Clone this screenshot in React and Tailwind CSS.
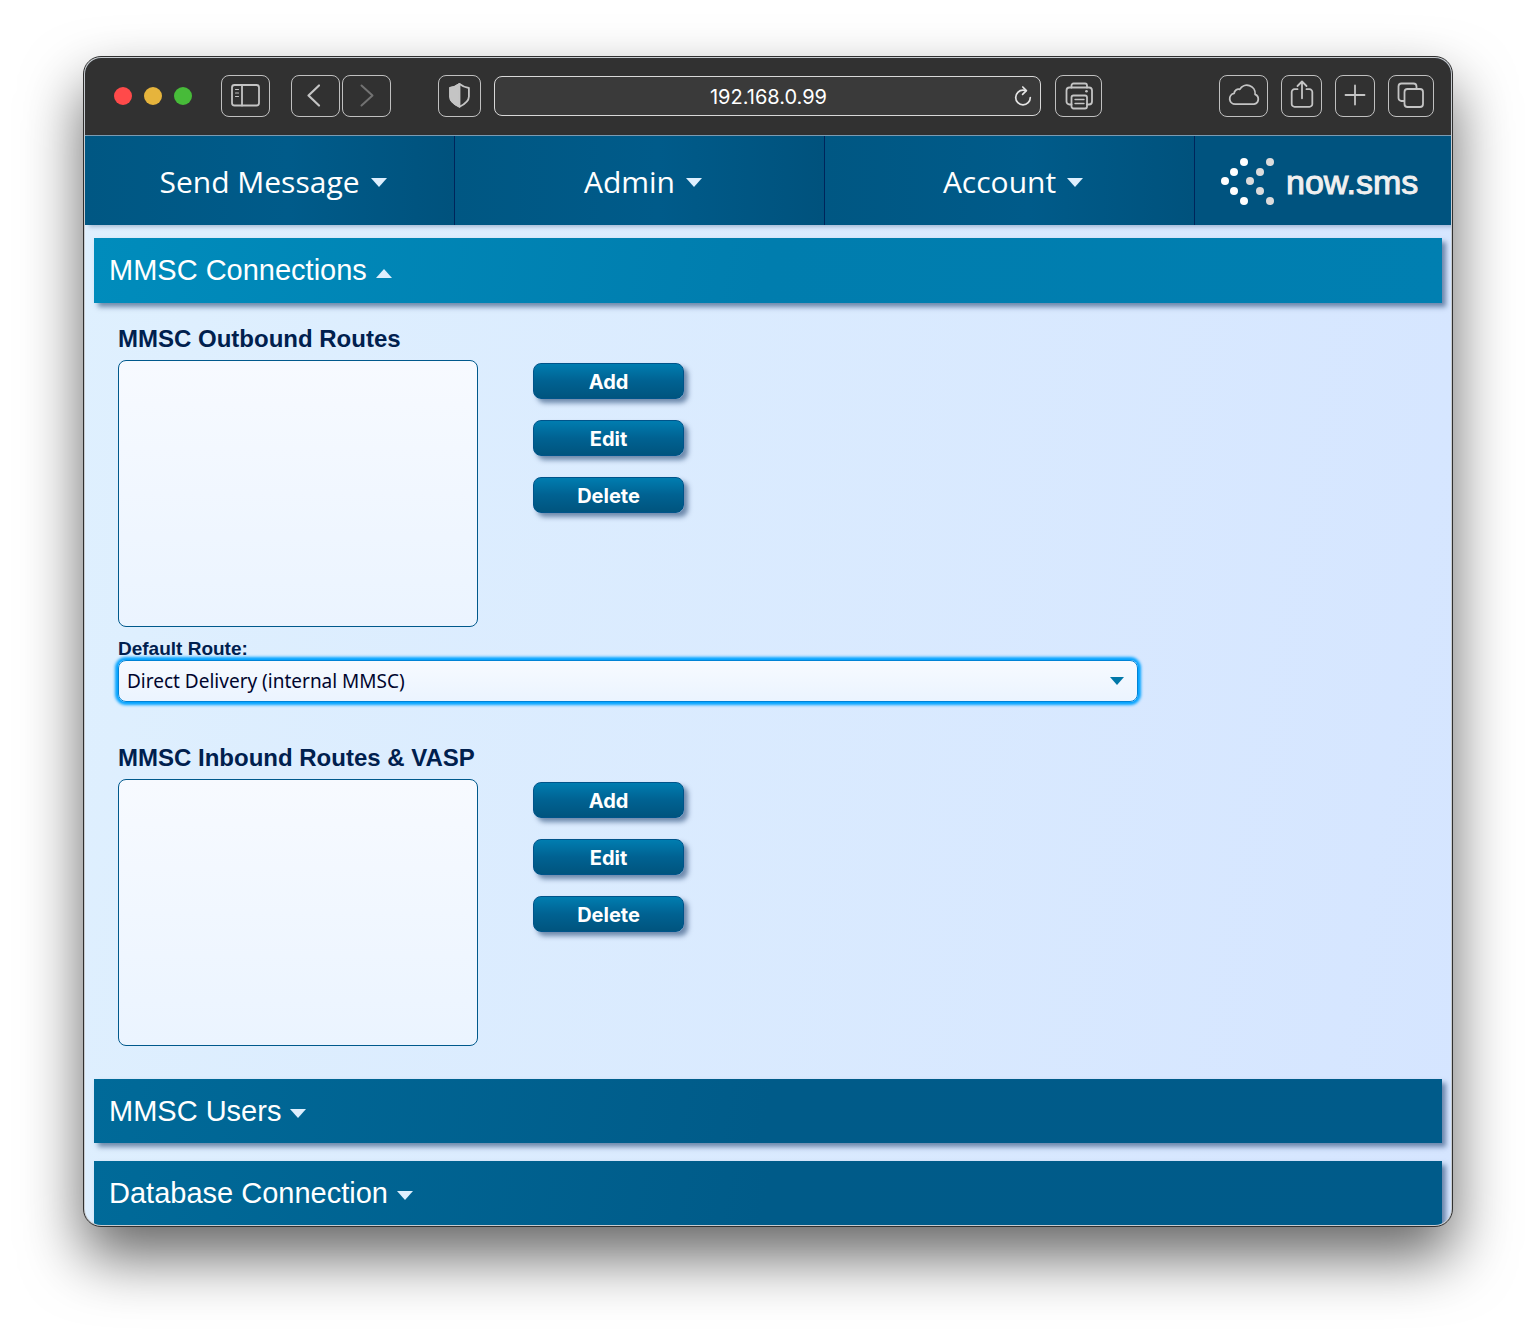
import React from "react";

function Icon({ children, className = "text-[#c4c4c4]" }) {
  return (
    <svg
      viewBox="0 0 32 32"
      className={`size-8 shrink-0 ${className}`}
      fill="none"
      stroke="currentColor"
      strokeWidth="1.8"
      strokeLinecap="round"
      strokeLinejoin="round"
      aria-hidden="true"
    >
      {children}
    </svg>
  );
}

function ToolButton({ label, className, children }) {
  return (
    <button
      type="button"
      aria-label={label}
      className={`flex h-[42px] shrink-0 items-center justify-center rounded-lg border border-[#c0c0c0] ${className}`}
    >
      {children}
    </button>
  );
}

function Toolbar() {
  return (
    <div className="flex h-[78px] items-center border-b border-[#7f9fb5] bg-[#313131] pr-[17px] pb-px pl-[29px]">
      <div className="flex gap-3">
        <button type="button" aria-label="Close" className="size-[18px] rounded-full bg-[#ff4a4a]" />
        <button type="button" aria-label="Minimize" className="size-[18px] rounded-full bg-[#e6b43c]" />
        <button type="button" aria-label="Zoom" className="size-[18px] rounded-full bg-[#47bb39]" />
      </div>
      <ToolButton label="Sidebar" className="ml-[29px] w-[49px]">
        <Icon>
          <rect x="2" y="5" width="27" height="20.5" rx="2.5" />
          <path d="M12 5v20.5" />
          <path d="M5.5 9.5h3M5.5 13h3M5.5 16.5h3" strokeWidth="1.2" />
        </Icon>
      </ToolButton>
      <div className="ml-[21px] flex gap-[2px]">
        <ToolButton label="Back" className="w-[49px]">
          <Icon>
            <path d="M19 5.5L8.5 15.5l10.500 10" strokeWidth="2.2" />
          </Icon>
        </ToolButton>
        <ToolButton label="Forward" className="w-[49px]">
          <Icon className="text-[#727272]">
            <path d="M10.5 5.5l11 10-11 10" strokeWidth="2" />
          </Icon>
        </ToolButton>
      </div>
      <ToolButton label="Privacy report" className="ml-[47px] w-[43px]">
        <Icon>
          <path d="M15.500 4c3 2.300 6 3.500 9.400 4v8.500c0 5-4.200 7.700-9.400 10.300-5.200-2.600-9.400-5.300-9.400-10.300V8c3.400-.5 6.400-1.700 9.400-4z" />
          <path d="M15.500 4v22.800c-5.200-2.600-9.400-5.300-9.400-10.300V8c3.400-.5 6.400-1.700 9.400-4z" fill="currentColor" />
        </Icon>
      </ToolButton>
      <div className="ml-[13px] flex h-10 min-w-0 flex-1 items-center rounded-lg border border-[#d8d8d8] bg-[#3a3a3a] pr-2">
        <input
          aria-label="Address"
          defaultValue="192.168.0.99"
          className="min-w-0 flex-1 bg-transparent pt-px pl-7 text-center font-['Inter',sans-serif] text-[20px] text-white outline-none"
        />
        <button type="button" aria-label="Reload" className="text-[#e4e4e4]">
          <svg viewBox="0 0 18 22" className="h-[22px] w-[18px]" fill="none" stroke="currentColor" strokeWidth="1.7" strokeLinecap="round" strokeLinejoin="round">
            <path d="M16.300 12.500a7.300 7.300 0 1 1-7.300-7.300c1 0 2 .2 2.800.5" />
            <path d="M8.800 2l3.600 3.700-3.800 3.600" />
          </svg>
        </button>
      </div>
      <ToolButton label="Print" className="ml-[14px] w-[47px]">
        <Icon>
          <path d="M8.500 24.500H6.500a3 3 0 0 1-3-3V10.500a3 3 0 0 1 3-3h19.500a3 3 0 0 1 3 3v11a3 3 0 0 1-3 3h-2" />
          <path d="M8.500 7.500V5.500a2 2 0 0 1 2-2h11.500a2 2 0 0 1 2 2v2" />
          <rect x="8.500" y="15.500" width="15.500" height="13" rx="2" />
          <path d="M12 19.500h9M12 23.500h9" strokeWidth="1.4" />
          <circle cx="23.500" cy="11.300" r="1.300" fill="currentColor" stroke="none" />
        </Icon>
      </ToolButton>
      <div className="ml-[117px] flex gap-[13px]">
        <ToolButton label="iCloud tabs" className="w-[49px]">
          <Icon>
            <path d="M7.500 24.200a5.500 5.500 0 0 1-1.300-10.900 4.200 4.200 0 0 1 5.600-3.900 8.200 8.200 0 0 1 15.300 4.900A5.200 5.200 0 0 1 26 24.200z" />
          </Icon>
        </ToolButton>
        <ToolButton label="Share" className="w-[41px]">
          <Icon>
            <path d="M11.500 9.200H8.500a2.800 2.800 0 0 0-2.800 2.800v12a2.800 2.800 0 0 0 2.800 2.800h15a2.800 2.800 0 0 0 2.800-2.800V12a2.800 2.800 0 0 0-2.800-2.800h-3" />
            <path d="M16 18.300V1.500M11.500 6L16 1.500 20.500 6" />
          </Icon>
        </ToolButton>
        <ToolButton label="New tab" className="w-10">
          <Icon>
            <path d="M16 5.500v19M6.500 15h19" />
          </Icon>
        </ToolButton>
        <ToolButton label="Tab overview" className="w-[46px]">
          <Icon>
            <path d="M9 21H6.500a3 3 0 0 1-3-3V6.500a3 3 0 0 1 3-3h12a3 3 0 0 1 3 3v2.200" />
            <rect x="9.500" y="9" width="18.500" height="18" rx="3" />
          </Icon>
        </ToolButton>
      </div>
    </div>
  );
}

function Caret({ up, className = "" }) {
  return (
    <svg viewBox="0 0 16 9" className={`h-[9px] w-4 shrink-0 ${className}`} fill="currentColor" aria-hidden="true">
      <path d={up ? "M0 9L8 0l8 9z" : "M0 0h16L8 9z"} />
    </svg>
  );
}

const LOGO_DOTS = [
  [24, 5, 1], [14, 15, 1], [5, 24, 1], [14, 34, 1], [24, 44, 1],
  [50, 5, 0], [40, 15, 0], [30, 24, 0], [40, 34, 0], [50, 44, 0],
];

function Nav() {
  return (
    <nav className="flex h-[89px] text-white shadow-[4px_2px_4px_rgba(0,40,90,0.25)]">
      {["Send Message", "Admin", "Account"].map((name) => (
        <button
          key={name}
          type="button"
          className="flex flex-1 items-center justify-center gap-[11px] border-r border-[#00255a] bg-linear-to-r from-[#005783] via-[#005b8a] via-55% to-[#00527d] pt-[2px] pl-[7px] font-['Open_Sans',sans-serif] text-[30px] hover:brightness-110"
        >
          <span className="pb-px">{name}</span>
          <Caret className="mt-[2px] text-[#deeffe]" />
        </button>
      ))}
      <a href="#home" className="flex w-64 items-center gap-3 bg-[#00537f] pt-[2px] pl-[25px]">
        <svg viewBox="0 0 54 49" className="h-[49px] w-[54px]" aria-hidden="true">
          {LOGO_DOTS.map(([x, y, bright]) => (
            <circle key={`${x}-${y}`} cx={x} cy={y} r="4" fill={bright ? "#ffffff" : "#dcdcdc"} />
          ))}
        </svg>
        <span className="font-['Liberation_Sans',sans-serif] text-[34px] leading-10 text-[#f0f0f0] [-webkit-text-stroke:1px_#f0f0f0]">
          now.sms
        </span>
      </a>
    </nav>
  );
}

function SectionBar({ title, open, className }) {
  return (
    <button
      type="button"
      aria-expanded={!!open}
      className={`flex w-full items-center gap-[9px] pt-px pl-[15px] text-left text-[29px] text-white shadow-[4px_4px_5px_rgba(0,40,90,0.5)] ${className} ${
        open
          ? "bg-linear-[100deg] from-[#008cbc] via-[#007dae] to-[#007fb1]"
          : "bg-linear-[100deg] from-[#006a99] via-[#005b89] to-[#005b8a]"
      }`}
    >
      <span>{title}</span>
      <Caret up={open} className="mt-1 text-[#deeffe]" />
    </button>
  );
}

function RouteEditor({ id, title }) {
  return (
    <div>
      <label htmlFor={id} className="block pt-px text-2xl leading-8 font-bold text-[#00204e]">
        {title}
      </label>
      <div className="mt-[5px] flex items-start gap-[55px]">
        <select
          id={id}
          multiple
          className="h-[267px] w-[360px] overflow-hidden rounded-lg border border-[#00598c] bg-linear-to-b from-[#f7faff] to-[#ebf4ff]"
        />
        <div className="flex flex-col gap-[21px] pt-[3px]">
          {["Add", "Edit", "Delete"].map((action) => (
            <button
              key={action}
              type="button"
              className="h-9 w-[151px] rounded-lg border border-[#00548a] bg-linear-to-b from-[#007db0] via-[#006292] to-[#00547e] pt-px font-['Inter',sans-serif] text-[20px] leading-8 font-bold text-white shadow-[4px_4px_5px_rgba(0,40,90,0.5)]"
            >
              {action}
            </button>
          ))}
        </div>
      </div>
    </div>
  );
}

export default function App() {
  return (
    <div className="min-h-screen bg-white px-[83px] pt-14 pb-[110px] font-['Liberation_Sans',sans-serif]">
      <div className="rounded-[18px] border border-[#303030] bg-[#c8ccd0] p-px shadow-[0_30px_60px_rgba(0,0,0,0.6)]">
        <div className="overflow-hidden rounded-2xl bg-linear-[100deg] from-[#dff0fe] to-[#d5e5ff]">
          <Toolbar />
          <Nav />
          <main className="px-[9px] pt-[13px]">
            <SectionBar title="MMSC Connections" open className="h-[65px]" />
            <section className="px-6 pt-[19px] pb-[33px]">
              <RouteEditor id="outbound" title="MMSC Outbound Routes" />
              <div className="mt-3 mb-[39px]">
                <label htmlFor="default-route" className="block text-[19px] leading-5 font-bold text-[#00204e]">
                  Default Route:
                </label>
                <div className="relative mt-px w-[1020px] max-w-full">
                  <select
                    id="default-route"
                    className="block h-[42px] w-full appearance-none rounded-lg border border-[#0083d6] bg-linear-to-b from-[#f7faff] to-[#ebf4ff] px-2 pt-px font-['Noto_Sans',sans-serif] text-[19px] text-[#00052e] shadow-[0_0_3px_3px_#00a2ff] outline-none"
                  >
                    <option>Direct Delivery (internal MMSC)</option>
                  </select>
                  <svg viewBox="0 0 14 8" className="pointer-events-none absolute top-[17px] right-[14px] h-2 w-[14px]" fill="#0077a8" aria-hidden="true">
                    <path d="M0 0h14L7 8z" />
                  </svg>
                </div>
              </div>
              <RouteEditor id="inbound" title="MMSC Inbound Routes &amp; VASP" />
            </section>
            <div className="flex flex-col gap-[18px]">
              <SectionBar title="MMSC Users" className="h-16" />
              <SectionBar title="Database Connection" className="h-16" />
            </div>
          </main>
        </div>
      </div>
    </div>
  );
}
